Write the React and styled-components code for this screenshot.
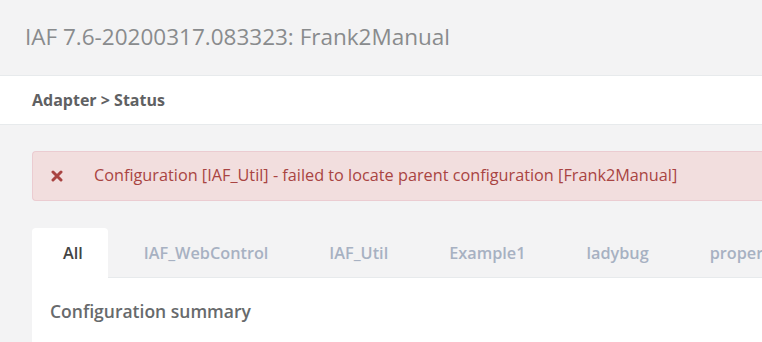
import React, { useState } from "react";
import styled, { createGlobalStyle } from "styled-components";

const GlobalStyle = createGlobalStyle`
  html, body {
    margin: 0;
    padding: 0;
    background: #f3f3f4;
    font-family: "Open Sans", "Helvetica Neue", Arial, sans-serif;
    overflow: hidden;
  }
`;

const tabs = ["All", "IAF_WebControl", "IAF_Util", "Example1", "ladybug", "properties"];

const Page = styled.div`
  width: 762px;
  height: 342px;
  overflow: hidden;
  background: #f3f3f4;
`;

const Header = styled.header`
  height: 76px;
  box-sizing: border-box;
  border-bottom: 1px solid #e7eaec;
  display: flex;
  align-items: center;
  padding-left: 25px;
`;

const Title = styled.h2`
  margin: 0;
  font-size: 22.5px;
  font-weight: 400;
  color: #898b8d;
  white-space: nowrap;
  position: relative;
  top: -1px;
`;

const Breadcrumb = styled.div`
  background: #fff;
  height: 48px;
  border-bottom: 1px solid #e7eaec;
  display: flex;
  align-items: center;
  padding-left: 32px;
  font-size: 16px;
  font-weight: 700;
  color: #5f6163;
`;

const Content = styled.main`
  padding: 26px 0 0 32px;
`;

const Alert = styled.div`
  display: flex;
  align-items: center;
  height: 50px;
  box-sizing: border-box;
  background: #f2dede;
  border: 1px solid #ebccd1;
  border-right: none;
  border-radius: 4px 0 0 4px;
  color: #a94442;
  font-size: 16.25px;
  white-space: nowrap;
`;

const AlertIcon = styled.span`
  width: 48px;
  display: flex;
  justify-content: center;
  margin-right: 13px;
`;

const AlertText = styled.span`
  position: relative;
  top: -1px;
`;

const TabBar = styled.ul`
  list-style: none;
  margin: 27px 0 0;
  padding: 0;
  display: flex;
  height: 49px;
  border-bottom: 1px solid #e7eaec;
  white-space: nowrap;
`;

const Tab = styled.li`
  display: flex;
  align-items: center;
  padding: 0 25px 0 31px;
  margin-right: 5px;
  margin-bottom: -1px;
  font-size: 16.25px;
  font-weight: 600;
  cursor: pointer;
  border-radius: 4px 4px 0 0;
  color: ${(p) => (p.$active ? "#444" : "#a7b1c2")};
  background: ${(p) => (p.$active ? "#fff" : "transparent")};
`;

const Panel = styled.section`
  background: #fff;
  height: 80px;
  padding: 21px 18px;
  box-sizing: border-box;
`;

const PanelTitle = styled.h5`
  margin: 0;
  font-size: 17.5px;
  font-weight: 600;
  color: #676a6c;
`;

const CloseIcon = () => (
  <svg width="12" height="12" viewBox="0 0 12 12">
    <path d="M2 2 L10 10 M10 2 L2 10" stroke="#a94442" strokeWidth="3" strokeLinecap="round" />
  </svg>
);

export default function App() {
  const [active, setActive] = useState("All");
  return (
    <Page>
      <GlobalStyle />
      <Header>
        <Title>IAF 7.6-20200317.083323: Frank2Manual</Title>
      </Header>
      <Breadcrumb>Adapter &gt; Status</Breadcrumb>
      <Content>
        <Alert>
          <AlertIcon>
            <CloseIcon />
          </AlertIcon>
          <AlertText>Configuration [IAF_Util] - failed to locate parent configuration [Frank2Manual]</AlertText>
        </Alert>
        <TabBar>
          {tabs.map((t) => (
            <Tab key={t} $active={active === t} onClick={() => setActive(t)}>
              {t}
            </Tab>
          ))}
        </TabBar>
        <Panel>
          <PanelTitle>Configuration summary</PanelTitle>
        </Panel>
      </Content>
    </Page>
  );
}
